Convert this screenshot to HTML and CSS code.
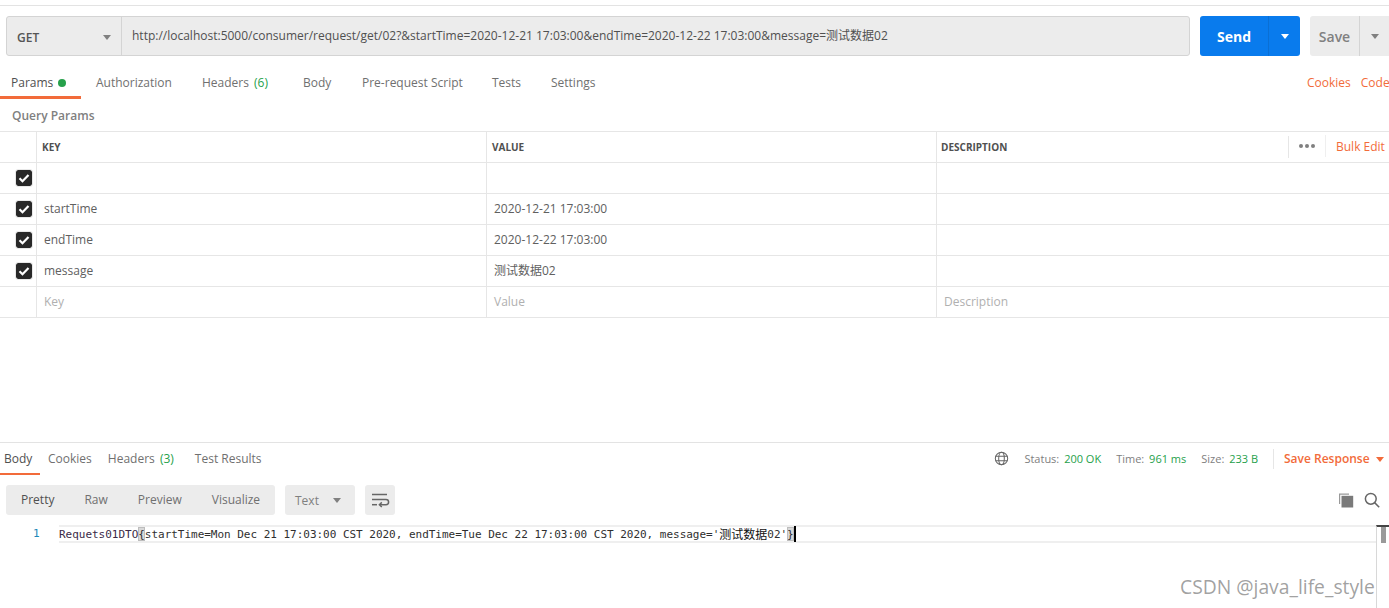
FILE: index.html
```html
<!DOCTYPE html>
<html lang="en">
<head>
<meta charset="utf-8">
<title>Postman</title>
<link rel="stylesheet" href="styles.css">
</head>
<body>
<div class="app">
  <div class="top-rule"></div>
  <div class="request-bar">
    <div class="url-group">
      <div class="method"><span>GET</span><i class="caret caret-grey"></i></div>
      <div class="url">http://localhost:5000/consumer/request/get/02?&amp;startTime=2020-12-21 17:03:00&amp;endTime=2020-12-22 17:03:00&amp;message=测试数据02</div>
    </div>
    <div class="send"><span class="send-label">Send</span><span class="send-drop"><i class="caret caret-white"></i></span></div>
    <div class="save"><span class="save-label">Save</span><span class="save-drop"><i class="caret caret-grey"></i></span></div>
  </div>

  <div class="req-tabs">
    <div class="tab tab-active tab-params">Params<b class="dot"></b></div>
    <div class="tab tab-auth">Authorization</div>
    <div class="tab tab-headers">Headers <em class="count">(6)</em></div>
    <div class="tab tab-body">Body</div>
    <div class="tab tab-pre">Pre-request Script</div>
    <div class="tab tab-tests">Tests</div>
    <div class="tab tab-settings">Settings</div>
    <div class="req-links"><span>Cookies</span><span>Code</span></div>
  </div>

  <div class="query-title">Query Params</div>

  <div class="table">
    <div class="row row-head">
      <div class="cell cell-check"></div>
      <div class="cell cell-key">KEY</div>
      <div class="cell cell-value">VALUE</div>
      <div class="cell cell-desc"><span>DESCRIPTION</span>
        <div class="head-tools"><span class="dots"><b></b><b></b><b></b></span><span class="bulk">Bulk Edit</span></div>
      </div>
    </div>
    <div class="row">
      <div class="cell cell-check"><span class="check"><svg viewBox="0 0 16 16" width="16" height="16"><path d="M3.5 8.3l3 3 6-6.2" fill="none" stroke="#fff" stroke-width="2.2"/></svg></span></div>
      <div class="cell cell-key"></div><div class="cell cell-value"></div><div class="cell cell-desc"></div>
    </div>
    <div class="row">
      <div class="cell cell-check"><span class="check"><svg viewBox="0 0 16 16" width="16" height="16"><path d="M3.5 8.3l3 3 6-6.2" fill="none" stroke="#fff" stroke-width="2.2"/></svg></span></div>
      <div class="cell cell-key">startTime</div><div class="cell cell-value">2020-12-21 17:03:00</div><div class="cell cell-desc"></div>
    </div>
    <div class="row">
      <div class="cell cell-check"><span class="check"><svg viewBox="0 0 16 16" width="16" height="16"><path d="M3.5 8.3l3 3 6-6.2" fill="none" stroke="#fff" stroke-width="2.2"/></svg></span></div>
      <div class="cell cell-key">endTime</div><div class="cell cell-value">2020-12-22 17:03:00</div><div class="cell cell-desc"></div>
    </div>
    <div class="row">
      <div class="cell cell-check"><span class="check"><svg viewBox="0 0 16 16" width="16" height="16"><path d="M3.5 8.3l3 3 6-6.2" fill="none" stroke="#fff" stroke-width="2.2"/></svg></span></div>
      <div class="cell cell-key">message</div><div class="cell cell-value">测试数据02</div><div class="cell cell-desc"></div>
    </div>
    <div class="row row-empty">
      <div class="cell cell-check"></div>
      <div class="cell cell-key">Key</div><div class="cell cell-value">Value</div><div class="cell cell-desc">Description</div>
    </div>
  </div>

  <div class="spacer"></div>

  <div class="response">
    <div class="res-tabs">
      <div class="rtab rtab-active">Body</div>
      <div class="rtab rtab-cookies">Cookies</div>
      <div class="rtab rtab-headers">Headers <em class="count">(3)</em></div>
      <div class="rtab">Test Results</div>
      <div class="res-meta">
        <svg class="globe" viewBox="0 0 16 16" width="15" height="15"><g fill="none" stroke="#666" stroke-width="1.1"><circle cx="8" cy="8" r="6.6"/><ellipse cx="8" cy="8" rx="3" ry="6.6"/><path d="M1.6 5.7h12.8M1.6 10.3h12.8"/></g></svg>
        <span class="meta-item">Status: <em>200 OK</em></span>
        <span class="meta-item">Time: <em>961 ms</em></span>
        <span class="meta-item">Size: <em>233 B</em></span>
        <span class="save-response"><span class="save-response-label">Save Response</span><i class="caret caret-orange"></i></span>
      </div>
    </div>
    <div class="res-toolbar">
      <div class="views">
        <span class="view view-active">Pretty</span><span class="view">Raw</span><span class="view">Preview</span><span class="view">Visualize</span>
      </div>
      <div class="format"><span>Text</span><i class="caret caret-grey"></i></div>
      <div class="wrap"><svg viewBox="0 0 20 20" width="20" height="20"><g fill="none" stroke="#666" stroke-width="1.5"><path d="M2 4.5h15M2 9.5h14a2.3 2.3 0 0 1 0 5.2h-6"/><path d="M2 14.7h5"/><path d="M11.8 12.4l-2.4 2.3 2.4 2.3"/></g></svg></div>
      <div class="res-icons">
        <svg viewBox="0 0 16 16" width="16" height="16"><path d="M1 1.5h10v1.2H2.2V12H1z" fill="#999"/><path d="M3.5 3.8H15.2V15.5H3.5z" fill="#7a7a7a"/></svg>
        <svg viewBox="0 0 16 16" width="16" height="16"><g fill="none" stroke="#666" stroke-width="1.5"><circle cx="6.8" cy="6.8" r="5.4"/><path d="M10.6 10.6L15.2 15.2"/></g></svg>
      </div>
    </div>
    <div class="code-area">
      <div class="gutter">1</div>
      <div class="code-wrap">
        <div class="code-line"><span class="c-dark">Requets01DTO</span><span class="bracket">{</span><span>startTime=Mon Dec 21 17:03:00 CST 2020, endTime=Tue Dec 22 17:03:00 CST 2020, message='</span><span class="cjk">测试数据</span><span>02'</span><span class="bracket">}</span><span class="cursor"></span></div>
      </div>
      <div class="scrollbar"><div class="thumb"></div></div>
    </div>
  </div>
</div>
<div class="watermark">CSDN @java_life_style</div>
</body>
</html>
```
FILE: styles.css
```css
* { box-sizing: border-box; }
html, body { margin: 0; padding: 0; height: 100%; overflow: hidden; background: #fff; }
body { font-family: "Open Sans", "Noto Sans CJK SC", sans-serif; font-size: 12px; color: #505050; position: relative; }
em { font-style: normal; }
.app { display: flex; flex-direction: column; height: 608px; }
.top-rule { height: 6px; border-bottom: 1px solid #e3e3e3; flex: none; }

.caret { display: inline-block; width: 0; height: 0; border-left: 4px solid transparent; border-right: 4px solid transparent; border-top: 5px solid #808080; }
.caret-white { border-top-color: #fff; }
.caret-orange { border-top-color: #f26b3a; }

.request-bar { display: flex; height: 40px; margin-top: 10px; padding-left: 6px; flex: none; }
.url-group { display: flex; width: 1184px; background: #ececec; border: 1px solid #d4d4d4; border-radius: 3px; }
.method { width: 115px; flex: none; border-right: 1px solid #d4d4d4; display: flex; align-items: center; justify-content: space-between; padding: 2px 10px 0 10px; font-size: 12px; font-weight: 600; color: #555; }
.url { padding-left: 10px; line-height: 38px; font-size: 12px; color: #505050; white-space: nowrap; }
.send { display: flex; width: 100px; margin-left: 10px; background: #097bed; border-radius: 3px; color: #fff; font-size: 14px; font-weight: 700; flex: none; }
.send-label { width: 69px; text-align: center; line-height: 41px; border-right: 1px solid #0a6fd4; }
.send-drop { flex: 1; display: flex; align-items: center; justify-content: center; }
.save { display: flex; width: 79px; margin-left: 10px; background: #ececec; border-radius: 3px 0 0 3px; color: #808080; font-size: 14px; font-weight: 600; flex: none; }
.save-label { width: 50px; text-align: center; line-height: 41px; border-right: 1px solid #d4d4d4; }
.save-drop { flex: 1; display: flex; align-items: center; justify-content: center; }

.req-tabs { display: flex; height: 43px; flex: none; position: relative; }
.tab { padding-top: 18px; color: #707070; line-height: 17px; white-space: nowrap; }
.tab-active { color: #505050; border-bottom: 3px solid #f26b3a; }
.tab-params { width: 81px; padding-left: 11px; }
.dot { display: inline-block; width: 8px; height: 8px; background: #26a14b; border-radius: 50%; margin-left: 5px; }
.tab-auth { margin-left: 15px; width: 106px; }
.tab-headers { width: 101px; word-spacing: 2px; }
.tab-body { width: 59px; }
.tab-pre { width: 130px; }
.tab-tests { width: 59px; }
.count { color: #26a14b; }
.req-links { margin-left: auto; display: flex; gap: 10px; padding-top: 18px; line-height: 17px; color: #f26b3a; width: 82px; white-space: nowrap; }

.query-title { height: 32px; padding: 8px 0 0 12px; line-height: 17px; font-weight: 600; font-size: 12px; color: #808080; flex: none; }

.table { border-top: 1px solid #e6e6e6; flex: none; }
.row { display: flex; height: 31px; border-bottom: 1px solid #e6e6e6; }
.cell { border-right: 1px solid #e6e6e6; line-height: 30px; padding-left: 7px; white-space: nowrap; }
.cell-check { width: 37px; display: flex; align-items: center; padding: 0 0 0 16px; }
.cell-key { width: 450px; color: #606060; }
.cell-value { width: 450px; color: #606060; }
.cell-desc { flex: 1; border-right: 0; display: flex; justify-content: space-between; }
.row-head .cell { font-size: 10px; font-weight: 700; color: #505050; padding-left: 5px; }
.row-head .cell-desc { padding-left: 4px; }
.head-tools { display: flex; align-items: center; height: 22px; margin-top: 4px; border-left: 1px solid #e6e6e6; font-size: 12px; width: 101px; }
.dots { display: flex; gap: 2px; width: 37px; padding-left: 10px; height: 22px; align-items: center; border-right: 1px solid #efefef; margin-top: -2px; }
.dots b { width: 4px; height: 4px; border-radius: 50%; background: #808080; }
.bulk { padding-left: 10px; font-size: 12px; font-weight: 400; color: #f26b3a; }
.check { width: 16px; height: 16px; background: #282828; border-radius: 2px; display: block; outline: 1px solid #e8e8e8; flex: none; }
.check svg { display: block; }
.row-empty .cell { color: #b0b0b0; }

.spacer { flex: 1; }

.response { height: 166px; border-top: 1px solid #e3e3e3; flex: none; }
.res-tabs { display: flex; height: 32px; }
.rtab { padding: 7px 4px 0; line-height: 17px; color: #707070; white-space: nowrap; }
.rtab-active { color: #505050; width: 40px; border-bottom: 2px solid #f26b3a; height: 32px; margin-right: 4px; }
.rtab-cookies { margin-right: 8px; }
.rtab-headers { margin-right: 13px; word-spacing: 2px; }
.res-meta { margin-left: auto; display: flex; align-items: flex-start; padding-top: 7px; line-height: 17px; color: #808080; font-size: 11px; white-space: nowrap; }
.globe { margin: 1px 14px 0 0; position: relative; left: -1px; }
.meta-item { margin-right: 15px; }
.meta-item em { color: #26a14b; margin-left: 2px; }
.save-response { border-left: 1px solid #e6e6e6; padding-left: 10px; height: 20px; margin-top: -1px; line-height: 17px; color: #f26b3a; font-size: 12px; font-weight: 600; width: 116px; display: flex; align-items: center; justify-content: space-between; padding-right: 5px; }
.save-response-label { margin-top: -2px; }

.res-toolbar { display: flex; height: 30px; margin-top: 10px; padding-left: 6px; padding-right: 9px; }
.views { display: flex; width: 269px; background: #ececec; border-radius: 3px; line-height: 30px; padding-left: 15px; color: #707070; }
.view { margin-right: 30px; }
.view-active { color: #505050; }
.format { width: 70px; margin-left: 10px; background: #ececec; border-radius: 3px; display: flex; align-items: center; justify-content: space-between; padding: 0 14px 0 10px; color: #808080; }
.wrap { width: 30px; margin-left: 10px; background: #ececec; border-radius: 3px; display: flex; align-items: center; justify-content: center; }
.res-icons { margin-left: auto; display: flex; align-items: center; gap: 10px; }

.code-area { display: flex; height: 93px; margin-top: 10px; }
.gutter { width: 59px; flex: none; padding: 0 0 0 33px; height: 18px; font: 11px/18px "DejaVu Sans Mono", monospace; color: #1e88b8; }
.code-wrap { flex: 1; min-width: 0; }
.code-line { height: 18px; border-top: 2px solid #efefef; border-bottom: 2px solid #efefef; display: flex; font: 11px/15px "DejaVu Sans Mono", "Noto Sans CJK SC", monospace; letter-spacing: -0.02px; color: #2f2f2f; white-space: pre; }
.c-dark { color: #3b2a48; }
.bracket { background: #d8d8d8; outline: 1px solid #bdbdbd; outline-offset: -1px; width: 6.6px; }
.cjk { font-family: "Noto Sans CJK SC", sans-serif; color: #111; font-size: 12px; line-height: 14px; letter-spacing: 0; }
.cursor { width: 2px; background: #000; height: 16px; margin-top: -1px; }
.scrollbar { width: 13px; flex: none; border-left: 1px solid #d8d8d8; border-top: 2px solid #444; }
.thumb { width: 5px; height: 16px; background: #9a9a9a; margin-left: 4px; }

.watermark { position: absolute; left: 1180px; top: 573px; font-size: 19.3px; line-height: 27px; color: rgba(120,120,120,0.7); white-space: nowrap; }
```
